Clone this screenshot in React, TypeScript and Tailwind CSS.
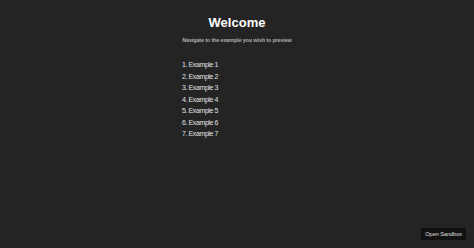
export default function App() {
  return (
    <div className="relative w-[474px] h-[248px] bg-[#242424] overflow-hidden" style={{ fontFamily: '"Liberation Sans", Arial, sans-serif' }}>
      <div className="flex flex-col items-center pt-[14px]">
        <h1 className="text-[13px] leading-[18px] font-bold text-white">Welcome</h1>
        <p className="mt-[4px] text-[5.5px] leading-[8px] font-bold tracking-[-0.17px] text-[#adadad]">Navigate to the example you wish to preview</p>
      </div>
      <ol className="ml-[182px] mt-[15px] text-[7px] leading-[11.5px] tracking-[-0.4px] text-[#e2e2e2]">
        <li>1. Example 1</li>
        <li>2. Example 2</li>
        <li>3. Example 3</li>
        <li>4. Example 4</li>
        <li>5. Example 5</li>
        <li>6. Example 6</li>
        <li>7. Example 7</li>
      </ol>
      <div className="absolute right-[8px] bottom-[8px] bg-[#111111] px-[4px] text-[5.5px] leading-[12px] text-[#e0e0e0]">Open Sandbox</div>
    </div>
  );
}
